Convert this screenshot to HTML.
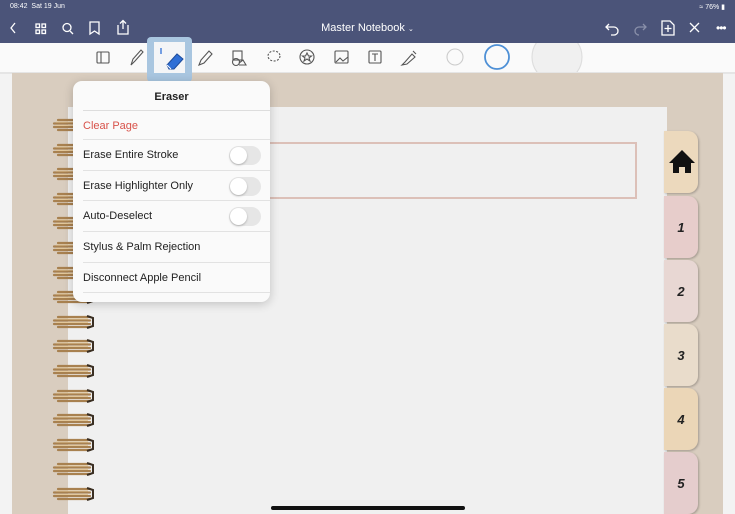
<!DOCTYPE html>
<html><head><style>
body{margin:0;width:735px;height:514px;overflow:hidden;font-family:"Liberation Sans",sans-serif;background:#f3f3f3;position:relative}
.abs{position:absolute}
.nav{left:0;top:0;width:735px;height:43px;background:#4b5479;color:#fff}
.tb{left:0;top:43px;width:735px;height:29px;background:#fafafa;border-bottom:1px solid #ddd}
.cover{left:12px;top:73px;width:711px;height:441px;background:#d9cdbf}
.page{left:68px;top:107px;width:599px;height:407px;background:#f0f0f0}
.tab{left:664px;width:34px;height:62px;border-radius:0 10px 10px 0;box-shadow:1px 1px 2px rgba(0,0,0,.25);font:italic bold 13px "Liberation Sans",sans-serif;color:#222;display:flex;align-items:center;justify-content:center}
.ring{left:50px;width:46px;height:16px}
.menu{left:73px;top:81px;width:197px;height:221px;background:#fafafa;border-radius:9px;box-shadow:0 2px 10px rgba(0,0,0,.2);font-size:11px;color:#222}
.row{position:absolute;left:10px;right:0;height:31px;border-top:1px solid #e2e2e2;line-height:31px}
.tg{position:absolute;right:9px;top:6px;width:32px;height:19px;border-radius:10px;background:#e6e6e6}
.tg:after{content:"";position:absolute;left:1px;top:1px;width:17px;height:17px;border-radius:50%;background:#fff;box-shadow:0 1px 2px rgba(0,0,0,.25)}
svg{position:absolute}
</style></head><body>
<div class="abs nav">
<div class="abs" style="left:10px;top:3px;font-size:7px">08:42&nbsp; Sat 19 Jun</div>
<div class="abs" style="right:10px;top:3px;font-size:7px">≈ 76% ▮</div>
<div class="abs" style="left:0;width:735px;top:22px;text-align:center;font-size:11px">Master Notebook <span style="font-size:7px">⌄</span></div>
<svg width="735" height="43" fill="none" stroke="#fff" stroke-width="1.3">
<path d="M15 23l-4 5 4 5"/>
<rect x="36" y="24" width="3.5" height="3.5"/><rect x="42" y="24" width="3.5" height="3.5"/><rect x="36" y="30" width="3.5" height="3.5"/><rect x="42" y="30" width="3.5" height="3.5"/>
<circle cx="67" cy="27.5" r="4"/><path d="M70 31l3 3"/>
<path d="M90 22h9v12l-4.5-3-4.5 3z"/>
<path d="M118 25v9h10v-9M123 21v8M120 23.5l3-3 3 3"/>
<path d="M609 24l-3 3 3 3M606 27h8a4 4 0 0 1 0 8h-3"/>
<path d="M643 24l3 3-3 3M646 27h-7a4 4 0 0 0 0 8" stroke="#8a90aa"/>
<path d="M662 21h8l4 4v10h-12zM668 25v7M664.5 28.5h7"/>
<path d="M690 23l9 9M699 23l-9 9"/>
</svg>
<div class="abs" style="left:716px;top:21px;font-size:12px;letter-spacing:-1px">•••</div>
</div>
<div class="abs tb">
<svg width="735" height="29" fill="none" stroke="#555" stroke-width="1.1">
<rect x="97" y="9" width="12" height="11" rx="1"/><path d="M101 9v11"/>
<path d="M131 22l2-6 8-9 2 2-8 9z"/>
<path d="M199 22l2-5 8-9 3 3-8 9z"/>
<rect x="233" y="8" width="9" height="9"/><circle cx="236" cy="19" r="3.5"/><path d="M239 20l4-3 3 5h-7"/>
<ellipse cx="274" cy="13" rx="6" ry="5" stroke-dasharray="2 1.5"/>
<circle cx="307" cy="14" r="7"/><path d="M307 10l1.5 3h3l-2.5 2 1 3-3-2-3 2 1-3-2.5-2h3z"/>
<rect x="335" y="8" width="13" height="12" rx="1"/><path d="M336 19l4-4 3 3 5-4"/>
<rect x="369" y="8" width="12" height="12" rx="1"/><path d="M372 11h6M375 11v7"/>
<path d="M402 22l3-3 7-8 3 3-8 7zM413 8l3 3"/>
<circle cx="455" cy="14" r="8" stroke="#ccc"/>
<circle cx="497" cy="14" r="12" stroke="#4e90d6" stroke-width="1.8"/>
<circle cx="557" cy="14" r="25" stroke="#ddd" fill="#f0f0f0"/>
</svg>
</div>
<div class="abs" style="left:0;top:72px;width:735px;height:2px;background:#e5e5e5"></div>
<div class="abs cover"></div>
<div class="abs page"></div>
<div class="abs" style="left:147px;top:37px;width:45px;height:45px;border-radius:4px;background:#a9c6e0"></div>
<div class="abs" style="left:154px;top:42px;width:31px;height:31px;background:#f4f5f7"></div>
<svg width="45" height="45" style="left:147px;top:37px" fill="none">
<path d="M20 28l10-11 6 5-9 10h-5z" fill="#2f6fd6" stroke="#1d4c9c"/><path d="M20 28l4 4" stroke="#fff"/><path d="M14 11v6" stroke="#2f6fd6" stroke-width="1.3"/>
</svg>
<div class="abs" style="left:98px;top:142px;width:535px;height:53px;border:2px solid #dcc0b8"></div>
<div class="abs tab" style="top:131px;background:#ecd9bd;font-size:22px;font-style:normal"></div>
<svg width="30" height="30" style="left:667px;top:148px"><path d="M15 2L2 15h4v10h6v-6h6v6h6V15h4z" fill="#111"/></svg>
<div class="abs tab" style="top:196px;background:#e7cdcb">1</div>
<div class="abs tab" style="top:260px;background:#e8d7d3">2</div>
<div class="abs tab" style="top:324px;background:#e9dccb">3</div>
<div class="abs tab" style="top:388px;background:#ebd6b7">4</div>
<div class="abs tab" style="top:452px;background:#e5cdcd">5</div>
<div id="rings"></div>
<script>
var h='';for(var i=0;i<16;i++){var y=117+i*24.6;h+='<svg class="ring" style="left:50px;top:'+y+'px" width="46" height="16"><path d="M8 3h32M4 6.5h36M4 10h36M8 13h32" stroke="#a88150" stroke-width="2.2" fill="none" stroke-linecap="round"/><path d="M6 5h32M6 8.5h32" stroke="#e2c79a" stroke-width="1" fill="none"/><path d="M37 2l6 2v8l-6 2" stroke="#3a2e22" stroke-width="2" fill="none"/></svg>';}
document.getElementById('rings').innerHTML=h;
</script>
<div class="abs" style="left:271px;top:506px;width:194px;height:4px;border-radius:2px;background:#111"></div>
<div class="abs menu">
<div style="text-align:center;font-weight:bold;margin-top:10px">Eraser</div>
<div class="row" style="top:29px;color:#d8524a;border-color:#ddd">Clear Page</div>
<div class="row" style="top:58px">Erase Entire Stroke<div class="tg"></div></div>
<div class="row" style="top:89px">Erase Highlighter Only<div class="tg"></div></div>
<div class="row" style="top:119px">Auto-Deselect<div class="tg"></div></div>
<div class="row" style="top:150px">Stylus &amp; Palm Rejection</div>
<div class="row" style="top:181px">Disconnect Apple Pencil</div>
<div class="row" style="top:211px;height:0"></div>
</div>
</body></html>
